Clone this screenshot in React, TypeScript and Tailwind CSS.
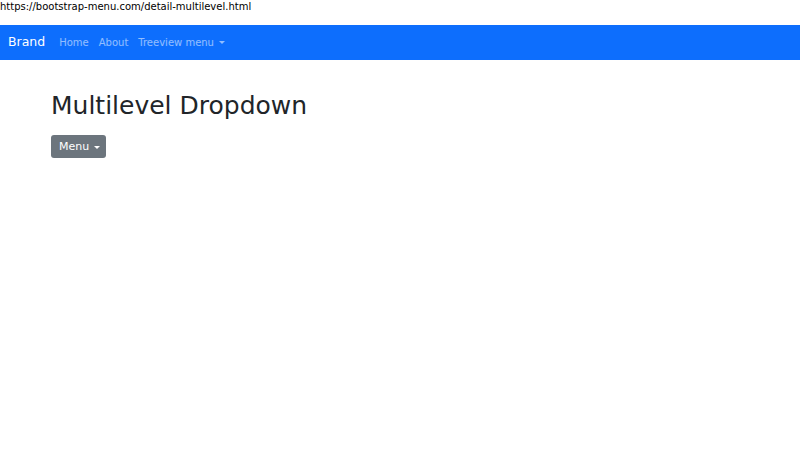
export default function App() {
  return (
    <div className="min-h-screen bg-white text-[#212529]" style={{ fontFamily: '"DejaVu Sans", sans-serif' }}>
      {/* address line */}
      <div className="h-[25px] text-[10px] leading-[14px] text-black">
        https://bootstrap-menu.com/detail-multilevel.html
      </div>

      {/* navbar */}
      <nav className="h-[35px] bg-[#0d6efd] flex items-center px-2">
        <a className="text-white text-[12.5px] mr-[14px]">Brand</a>
        <ul className="flex items-center gap-[10px] text-[10px] text-white/55">
          <li>Home</li>
          <li>About</li>
          <li className="flex items-center">
            Treeview menu
            <span className="ml-[5px] inline-block w-0 h-0 border-x-[3px] border-x-transparent border-t-[3px] border-t-white/55" />
          </li>
        </ul>
      </nav>

      <div className="px-[51px] pt-[30px]">
        <h2 className="text-[25px] leading-[31px] font-normal">Multilevel Dropdown</h2>
        <button className="mt-[14px] h-[23px] pl-[8px] pr-[6px] pt-px rounded-[3px] bg-[#6c757d] text-white text-[11px] flex items-center">
          Menu
          <span className="ml-[5px] inline-block w-0 h-0 border-x-[3px] border-x-transparent border-t-[3px] border-t-white" />
        </button>
      </div>
    </div>
  );
}
